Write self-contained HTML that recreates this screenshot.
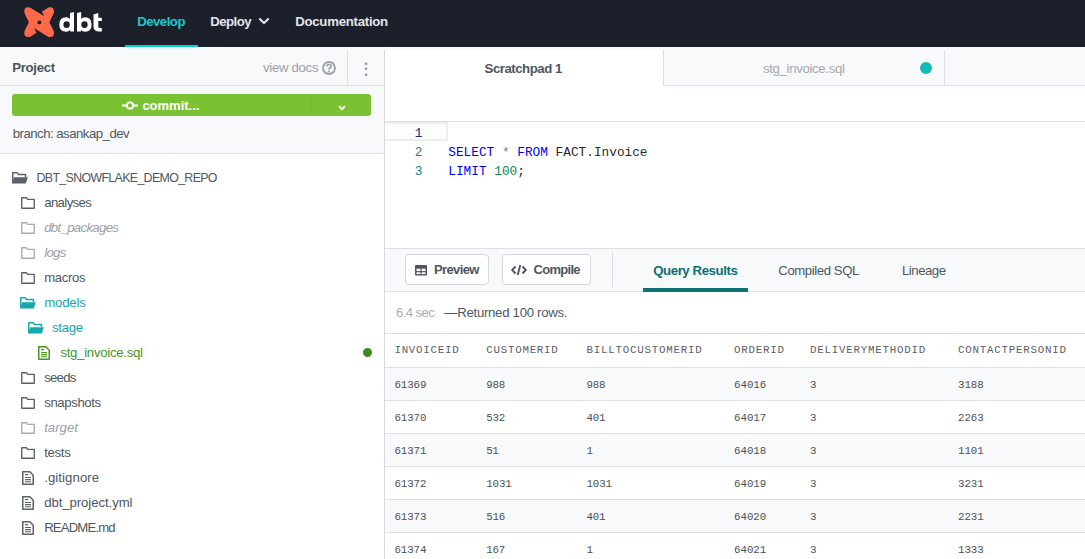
<!DOCTYPE html>
<html><head><meta charset="utf-8">
<style>
*{box-sizing:border-box;margin:0;padding:0}
html,body{width:1085px;height:559px;overflow:hidden;background:#fff;font-family:"Liberation Sans",sans-serif;position:relative}
.a{position:absolute}
.t{position:absolute;white-space:pre;line-height:1}
svg{position:absolute;overflow:visible}
.code{position:absolute;left:448.3px;font-family:"Liberation Mono",monospace;font-size:12.77px;line-height:1;white-space:pre;color:#2a2a2a}
</style></head><body>
<!-- NAV -->
<div class="a" style="left:0;top:0;width:1085px;height:47px;background:#1b202b"></div>
<svg style="left:23.7px;top:6.7px" width="30.3" height="30.3" viewBox="0 0 30 30">
  <path fill="#fe6a49" d="M0.4 5.8 Q-0.6 -0.6 5.8 0.4 L20.1 9.2 L17.6 4.6 L24.2 0.4 Q30.6 -0.6 29.6 5.8 L25.2 15 L29.6 24.2 Q30.6 30.6 24.2 29.6 L9.9 20.8 L12.4 25.4 L5.8 29.6 Q-0.6 30.6 0.4 24.2 L4.8 15 Z"/>
  <circle cx="15.2" cy="15.3" r="1.9" fill="#1b202b"/>
</svg>
<svg style="left:0;top:0" width="110" height="47" viewBox="0 0 110 47">
  <path fill="#fff" fill-rule="evenodd" d="M74 12 V31.5 H70.2 V30 Q68.6 31.8 66.3 31.8 Q59.3 31.8 59.3 24.6 Q59.3 17.3 66.3 17.3 Q68.6 17.3 70 18.9 V12.9 Z M66.6 21.2 Q63.4 21.2 63.4 24.6 Q63.4 28.1 66.6 28.1 Q69.8 28.1 69.8 24.6 Q69.8 21.2 66.6 21.2 Z"/>
  <path fill="#fff" fill-rule="evenodd" d="M77 12.9 L81.2 12 V18.9 Q82.6 17.3 84.9 17.3 Q91.6 17.3 91.6 24.6 Q91.6 31.8 84.9 31.8 Q82.6 31.8 81 30 V31.5 H77 Z M84.5 21.2 Q81.3 21.2 81.3 24.6 Q81.3 28.1 84.5 28.1 Q87.7 28.1 87.7 24.6 Q87.7 21.2 84.5 21.2 Z"/>
  <path fill="#fff" d="M93.5 14.6 L98.3 13 V17.8 H101.8 V21 H98.3 V26.4 Q98.3 28.1 100.2 28.1 H101.8 V31.5 H99.6 Q93.5 31.5 93.5 26.4 Z"/>
</svg>
<div class="a" style="left:125px;top:45px;width:73px;height:2px;background:#00d1d1"></div>
<svg style="left:258px;top:17px" width="12" height="8" viewBox="0 0 12 8"><path d="M1.3 1.5 L6 6 L10.7 1.5" stroke="#e3e6ea" stroke-width="2" fill="none"/></svg>

<!-- SIDEBAR -->
<div class="a" style="left:0;top:47px;width:384px;height:106px;background:#f8f9fb"></div>
<div class="a" style="left:0;top:85px;width:384px;height:1px;background:#dcdfe4"></div>
<div class="a" style="left:0;top:153px;width:384px;height:1px;background:#dcdfe4"></div>
<div class="a" style="left:347px;top:50px;width:1px;height:35px;background:#dcdfe4"></div>
<div class="a" style="left:384px;top:50px;width:1px;height:509px;background:#d5d8dc"></div>
<svg style="left:322px;top:60.6px" width="14" height="14" viewBox="0 0 14 14">
  <circle cx="7" cy="7" r="6" stroke="#9ba1a8" stroke-width="1.8" fill="none"/>
  <path d="M4.9 5.5 Q4.9 3.5 7 3.5 Q9.1 3.5 9.1 5.3 Q9.1 6.5 7.7 7.1 Q7 7.4 7 8.4" stroke="#9ba1a8" stroke-width="1.7" fill="none"/>
  <circle cx="7" cy="10.4" r="1" fill="#9ba1a8"/>
</svg>
<svg style="left:363px;top:60.7px" width="6" height="6" viewBox="0 0 6 6"><circle cx="3.05" cy="2.75" r="1.35" fill="#8f959c"/></svg>
<svg style="left:363px;top:66.1px" width="6" height="6" viewBox="0 0 6 6"><circle cx="3.05" cy="2.75" r="1.35" fill="#8f959c"/></svg>
<svg style="left:363px;top:71.5px" width="6" height="6" viewBox="0 0 6 6"><circle cx="3.05" cy="2.75" r="1.35" fill="#8f959c"/></svg>
<div class="a" style="left:12px;top:94px;width:359px;height:22px;background:#7bc232;border-radius:3px"></div>
<div class="a" style="left:310px;top:94px;width:1px;height:22px;background:#74b62f"></div>
<svg style="left:122px;top:101px" width="16" height="9" viewBox="0 0 16 9">
  <path d="M0 4.5 H4.5 M11.5 4.5 H16" stroke="#fff" stroke-width="2"/>
  <circle cx="8" cy="4.5" r="3.2" stroke="#fff" stroke-width="1.8" fill="none"/>
</svg>
<svg style="left:337.5px;top:104.5px" width="8" height="6" viewBox="0 0 8 6"><path d="M1 1.2 L4 4.2 L7 1.2" stroke="#fff" stroke-width="1.8" fill="none"/></svg>

<svg style="left:12.1px;top:172.1px" width="16" height="12" viewBox="0 0 16 12"><path d="M0.75 11.2 V0.75 H5.2 L6.4 2.4 H13.5 V5" stroke="#5a6169" stroke-width="1.5" fill="none" stroke-linejoin="round"/><path d="M0.3 11.6 L2.2 5.2 H15.8 L13.8 11.6 Z" fill="#5a6169"/></svg>
<svg style="left:21.2px;top:197.2px" width="14" height="12" viewBox="0 0 14 12"><path d="M0.75 11.25 V0.75 H5.6 L6.6 2.3 H13.25 V11.25 Z" stroke="#5a6169" stroke-width="1.35" fill="none" stroke-linejoin="round"/></svg>
<svg style="left:21.2px;top:222.2px" width="14" height="12" viewBox="0 0 14 12"><path d="M0.75 11.25 V0.75 H5.6 L6.6 2.3 H13.25 V11.25 Z" stroke="#a6abb1" stroke-width="1.35" fill="none" stroke-linejoin="round"/></svg>
<svg style="left:21.2px;top:247.2px" width="14" height="12" viewBox="0 0 14 12"><path d="M0.75 11.25 V0.75 H5.6 L6.6 2.3 H13.25 V11.25 Z" stroke="#a6abb1" stroke-width="1.35" fill="none" stroke-linejoin="round"/></svg>
<svg style="left:21.2px;top:272.2px" width="14" height="12" viewBox="0 0 14 12"><path d="M0.75 11.25 V0.75 H5.6 L6.6 2.3 H13.25 V11.25 Z" stroke="#5a6169" stroke-width="1.35" fill="none" stroke-linejoin="round"/></svg>
<svg style="left:20px;top:297px" width="16" height="12" viewBox="0 0 16 12"><path d="M0.75 11.2 V0.75 H5.2 L6.4 2.4 H13.5 V5" stroke="#15a8aa" stroke-width="1.5" fill="none" stroke-linejoin="round"/><path d="M0.3 11.6 L2.2 5.2 H15.8 L13.8 11.6 Z" fill="#15a8aa"/></svg>
<svg style="left:28px;top:322px" width="16" height="12" viewBox="0 0 16 12"><path d="M0.75 11.2 V0.75 H5.2 L6.4 2.4 H13.5 V5" stroke="#15a8aa" stroke-width="1.5" fill="none" stroke-linejoin="round"/><path d="M0.3 11.6 L2.2 5.2 H15.8 L13.8 11.6 Z" fill="#15a8aa"/></svg>
<svg style="left:38px;top:346.3px" width="12" height="14" viewBox="0 0 12 14"><path d="M0.75 0.75 H7.8 L11.25 4.2 V13.25 H0.75 Z" stroke="#46951f" stroke-width="1.5" fill="none" stroke-linejoin="round"/><path d="M3 3.6 H6.2 M3 6.5 H9 M3 8.6 H9 M3 10.7 H9" stroke="#46951f" stroke-width="1.1"/></svg>
<div class="a" style="left:363px;top:348px;width:9px;height:9px;border-radius:50%;background:#3d8c1e"></div>
<svg style="left:21.2px;top:372.2px" width="14" height="12" viewBox="0 0 14 12"><path d="M0.75 11.25 V0.75 H5.6 L6.6 2.3 H13.25 V11.25 Z" stroke="#5a6169" stroke-width="1.35" fill="none" stroke-linejoin="round"/></svg>
<svg style="left:21.2px;top:397.2px" width="14" height="12" viewBox="0 0 14 12"><path d="M0.75 11.25 V0.75 H5.6 L6.6 2.3 H13.25 V11.25 Z" stroke="#5a6169" stroke-width="1.35" fill="none" stroke-linejoin="round"/></svg>
<svg style="left:21.2px;top:422.2px" width="14" height="12" viewBox="0 0 14 12"><path d="M0.75 11.25 V0.75 H5.6 L6.6 2.3 H13.25 V11.25 Z" stroke="#a6abb1" stroke-width="1.35" fill="none" stroke-linejoin="round"/></svg>
<svg style="left:21.2px;top:447.2px" width="14" height="12" viewBox="0 0 14 12"><path d="M0.75 11.25 V0.75 H5.6 L6.6 2.3 H13.25 V11.25 Z" stroke="#5a6169" stroke-width="1.35" fill="none" stroke-linejoin="round"/></svg>
<svg style="left:22.2px;top:471.1px" width="12" height="14" viewBox="0 0 12 14"><path d="M0.75 0.75 H7.8 L11.25 4.2 V13.25 H0.75 Z" stroke="#5a6169" stroke-width="1.5" fill="none" stroke-linejoin="round"/><path d="M3 3.6 H6.2 M3 6.5 H9 M3 8.6 H9 M3 10.7 H9" stroke="#5a6169" stroke-width="1.1"/></svg>
<svg style="left:22.2px;top:496.1px" width="12" height="14" viewBox="0 0 12 14"><path d="M0.75 0.75 H7.8 L11.25 4.2 V13.25 H0.75 Z" stroke="#5a6169" stroke-width="1.5" fill="none" stroke-linejoin="round"/><path d="M3 3.6 H6.2 M3 6.5 H9 M3 8.6 H9 M3 10.7 H9" stroke="#5a6169" stroke-width="1.1"/></svg>
<svg style="left:22.2px;top:521.1px" width="12" height="14" viewBox="0 0 12 14"><path d="M0.75 0.75 H7.8 L11.25 4.2 V13.25 H0.75 Z" stroke="#5a6169" stroke-width="1.5" fill="none" stroke-linejoin="round"/><path d="M3 3.6 H6.2 M3 6.5 H9 M3 8.6 H9 M3 10.7 H9" stroke="#5a6169" stroke-width="1.1"/></svg>

<!-- EDITOR TABS -->
<div class="a" style="left:385px;top:47px;width:700px;height:3px;background:#f8f9fb"></div>
<div class="a" style="left:663px;top:50px;width:422px;height:36px;background:#f8f9fb;border-bottom:1px solid #dcdfe4"></div>
<div class="a" style="left:663px;top:50px;width:1px;height:35px;background:#dcdfe4"></div>
<div class="a" style="left:944px;top:50px;width:1px;height:35px;background:#dcdfe4"></div>
<div class="a" style="left:920px;top:62px;width:12px;height:12px;border-radius:50%;background:#15b8b8"></div>
<!-- EDITOR -->
<div class="a" style="left:385px;top:121px;width:700px;height:1px;background:#dcdfe4"></div>
<div class="a" style="left:385px;top:122px;width:700px;height:126px;background:#fffffd"></div>
<div class="a" style="left:385px;top:122px;width:62.5px;height:18.5px;background:#fdfdfc;border:2px solid #ededed;border-left:none"></div>
<div class="code" style="top:147.2px"><span style="color:#0000ff">SELECT</span> <span style="color:#7a7a7a">*</span> <span style="color:#0000ff">FROM</span> FACT.Invoice</div>
<div class="code" style="top:166.2px"><span style="color:#0000ff">LIMIT</span> <span style="color:#098658">100</span>;</div>

<!-- TOOLBAR -->
<div class="a" style="left:385px;top:248px;width:700px;height:44px;background:#f8f9fb;border-top:1px solid #dcdfe4;border-bottom:1px solid #dcdfe4"></div>
<div class="a" style="left:405px;top:254px;width:84px;height:31px;background:#fff;border:1px solid #d5d8dd;border-radius:4px"></div>
<div class="a" style="left:502px;top:254px;width:89px;height:31px;background:#fff;border:1px solid #d5d8dd;border-radius:4px"></div>
<svg style="left:414.9px;top:265.4px" width="12" height="10.4" viewBox="0 0 12 10.4">
  <rect x="0" y="0" width="12" height="10.4" rx="1" fill="#4e5560"/>
  <rect x="1.5" y="3.7" width="3.9" height="2.4" fill="#fff"/>
  <rect x="6.6" y="3.7" width="3.9" height="2.4" fill="#fff"/>
  <rect x="1.5" y="7.3" width="3.9" height="1.8" fill="#fff"/>
  <rect x="6.6" y="7.3" width="3.9" height="1.8" fill="#fff"/>
</svg>
<svg style="left:511px;top:264px" width="16" height="12" viewBox="0 0 16 12">
  <path d="M4.5 2.5 L1.2 6 L4.5 9.5 M11.5 2.5 L14.8 6 L11.5 9.5 M9.3 1 L6.7 11" stroke="#4e5560" stroke-width="1.9" fill="none"/>
</svg>
<div class="a" style="left:612px;top:252px;width:1px;height:35px;background:#dcdfe4"></div>
<div class="a" style="left:643px;top:287.5px;width:105px;height:4px;background:#0b7276"></div>

<!-- INFO / TABLE -->
<div class="a" style="left:385px;top:333px;width:700px;height:1px;background:#dcdfe4"></div>
<div class="a" style="left:385px;top:367px;width:700px;height:1px;background:#dcdfe4"></div>
<div class="a" style="left:385px;top:368px;width:700px;height:32px;background:#f8f9fb"></div>
<div class="a" style="left:385px;top:400px;width:700px;height:1px;background:#dcdfe4"></div>
<div class="a" style="left:385px;top:433px;width:700px;height:1px;background:#dcdfe4"></div>
<div class="a" style="left:385px;top:434px;width:700px;height:32px;background:#f8f9fb"></div>
<div class="a" style="left:385px;top:466px;width:700px;height:1px;background:#dcdfe4"></div>
<div class="a" style="left:385px;top:499px;width:700px;height:1px;background:#dcdfe4"></div>
<div class="a" style="left:385px;top:500px;width:700px;height:32px;background:#f8f9fb"></div>
<div class="a" style="left:385px;top:532px;width:700px;height:1px;background:#dcdfe4"></div>

<div class="t" style="left:137.20px;top:14.72px;font-size:13.2px;color:#1fc6c9;font-weight:bold;letter-spacing:-0.502px">Develop</div>
<div class="t" style="left:210.20px;top:14.72px;font-size:13.2px;color:#e3e6ea;font-weight:bold;letter-spacing:-0.494px">Deploy</div>
<div class="t" style="left:295.20px;top:14.72px;font-size:13.2px;color:#e3e6ea;font-weight:bold;letter-spacing:-0.249px">Documentation</div>
<div class="t" style="left:12.20px;top:60.82px;font-size:13.2px;color:#4e5560;font-weight:bold;letter-spacing:-0.286px">Project</div>
<div class="t" style="left:263.10px;top:60.62px;font-size:13.2px;color:#9ba1a8;letter-spacing:-0.313px">view docs</div>
<div class="t" style="left:142.40px;top:99.39px;font-size:13px;color:#ffffff;font-weight:bold;letter-spacing:-0.010px">commit...</div>
<div class="t" style="left:12.70px;top:126.52px;font-size:13.2px;color:#50575f;letter-spacing:-0.506px">branch: asankap_dev</div>
<div class="t" style="left:36.50px;top:171.90px;font-size:12.4px;color:#50575f;letter-spacing:-0.661px">DBT_SNOWFLAKE_DEMO_REPO</div>
<div class="t" style="left:44.20px;top:196.22px;font-size:13.2px;color:#50575f;letter-spacing:-0.623px">analyses</div>
<div class="t" style="left:44.20px;top:221.22px;font-size:13.2px;color:#9ba1a8;font-style:italic;letter-spacing:-0.675px">dbt_packages</div>
<div class="t" style="left:44.20px;top:246.22px;font-size:13.2px;color:#9ba1a8;font-style:italic;letter-spacing:-0.701px">logs</div>
<div class="t" style="left:44.20px;top:271.22px;font-size:13.2px;color:#50575f;letter-spacing:-0.387px">macros</div>
<div class="t" style="left:44.20px;top:296.22px;font-size:13.2px;color:#15a8aa;letter-spacing:-0.183px">models</div>
<div class="t" style="left:52.00px;top:321.22px;font-size:13.2px;color:#15a8aa;letter-spacing:-0.266px">stage</div>
<div class="t" style="left:60.40px;top:346.22px;font-size:13.2px;color:#46951f;letter-spacing:-0.279px">stg_invoice.sql</div>
<div class="t" style="left:44.20px;top:371.22px;font-size:13.2px;color:#50575f;letter-spacing:-0.751px">seeds</div>
<div class="t" style="left:44.20px;top:396.22px;font-size:13.2px;color:#50575f;letter-spacing:-0.391px">snapshots</div>
<div class="t" style="left:44.20px;top:421.22px;font-size:13.2px;color:#9ba1a8;font-style:italic;letter-spacing:-0.007px">target</div>
<div class="t" style="left:44.20px;top:446.22px;font-size:13.2px;color:#50575f;letter-spacing:-0.315px">tests</div>
<div class="t" style="left:44.20px;top:471.22px;font-size:13.2px;color:#50575f;letter-spacing:0.082px">.gitignore</div>
<div class="t" style="left:44.20px;top:496.22px;font-size:13.2px;color:#50575f;letter-spacing:-0.080px">dbt_project.yml</div>
<div class="t" style="left:44.20px;top:521.22px;font-size:13.2px;color:#50575f;letter-spacing:-0.863px">README.md</div>
<div class="t" style="left:484.60px;top:61.62px;font-size:13.2px;color:#4e5560;font-weight:bold;letter-spacing:-0.466px">Scratchpad 1</div>
<div class="t" style="left:762.90px;top:61.82px;font-size:13.2px;color:#a3a8ae;letter-spacing:-0.321px">stg_invoice.sql</div>
<div class="t" style="left:414.70px;top:128.23px;font-size:12.75px;color:#1c2a80;font-family:'Liberation Mono',monospace">1</div>
<div class="t" style="left:414.70px;top:147.23px;font-size:12.75px;color:#237893;font-family:'Liberation Mono',monospace">2</div>
<div class="t" style="left:414.70px;top:166.23px;font-size:12.75px;color:#237893;font-family:'Liberation Mono',monospace">3</div>
<div class="t" style="left:434.00px;top:263.29px;font-size:13px;color:#4e5560;font-weight:bold;letter-spacing:-0.626px">Preview</div>
<div class="t" style="left:533.60px;top:263.29px;font-size:13px;color:#4e5560;font-weight:bold;letter-spacing:-0.716px">Compile</div>
<div class="t" style="left:653.20px;top:264.32px;font-size:13.2px;color:#0d6f72;font-weight:bold;letter-spacing:-0.402px">Query Results</div>
<div class="t" style="left:778.30px;top:264.32px;font-size:13.2px;color:#50575f;letter-spacing:-0.433px">Compiled SQL</div>
<div class="t" style="left:902.00px;top:264.32px;font-size:13.2px;color:#50575f;letter-spacing:-0.490px">Lineage</div>
<div class="t" style="left:396.00px;top:305.82px;font-size:13.2px;color:#a9adb2;letter-spacing:-0.622px">6.4 sec</div>
<div class="t" style="left:444.30px;top:305.82px;font-size:13.2px;color:#50575f;letter-spacing:-0.282px">—Returned 100 rows.</div>
<div class="t" style="left:394.40px;top:345.33px;font-size:10.8px;color:#5a6066;font-family:'Liberation Mono',monospace;letter-spacing:0.757px">INVOICEID</div>
<div class="t" style="left:486.20px;top:345.33px;font-size:10.8px;color:#5a6066;font-family:'Liberation Mono',monospace;letter-spacing:0.761px">CUSTOMERID</div>
<div class="t" style="left:586.50px;top:345.33px;font-size:10.8px;color:#5a6066;font-family:'Liberation Mono',monospace;letter-spacing:0.771px">BILLTOCUSTOMERID</div>
<div class="t" style="left:734.10px;top:345.33px;font-size:10.8px;color:#5a6066;font-family:'Liberation Mono',monospace;letter-spacing:0.749px">ORDERID</div>
<div class="t" style="left:810.10px;top:345.33px;font-size:10.8px;color:#5a6066;font-family:'Liberation Mono',monospace;letter-spacing:0.771px">DELIVERYMETHODID</div>
<div class="t" style="left:958.10px;top:345.33px;font-size:10.8px;color:#5a6066;font-family:'Liberation Mono',monospace;letter-spacing:0.769px">CONTACTPERSONID</div>
<div class="t" style="left:394.40px;top:379.83px;font-size:10.8px;color:#4b5157;font-family:'Liberation Mono',monospace;letter-spacing:-0.077px">61369</div>
<div class="t" style="left:486.20px;top:379.83px;font-size:10.8px;color:#4b5157;font-family:'Liberation Mono',monospace;letter-spacing:-0.177px">988</div>
<div class="t" style="left:586.50px;top:379.83px;font-size:10.8px;color:#4b5157;font-family:'Liberation Mono',monospace;letter-spacing:-0.177px">988</div>
<div class="t" style="left:734.10px;top:379.83px;font-size:10.8px;color:#4b5157;font-family:'Liberation Mono',monospace;letter-spacing:-0.077px">64016</div>
<div class="t" style="left:810.10px;top:379.83px;font-size:10.8px;color:#4b5157;font-family:'Liberation Mono',monospace">3</div>
<div class="t" style="left:958.10px;top:379.83px;font-size:10.8px;color:#4b5157;font-family:'Liberation Mono',monospace;letter-spacing:-0.107px">3188</div>
<div class="t" style="left:394.40px;top:412.83px;font-size:10.8px;color:#4b5157;font-family:'Liberation Mono',monospace;letter-spacing:-0.077px">61370</div>
<div class="t" style="left:486.20px;top:412.83px;font-size:10.8px;color:#4b5157;font-family:'Liberation Mono',monospace;letter-spacing:-0.177px">532</div>
<div class="t" style="left:586.50px;top:412.83px;font-size:10.8px;color:#4b5157;font-family:'Liberation Mono',monospace;letter-spacing:-0.177px">401</div>
<div class="t" style="left:734.10px;top:412.83px;font-size:10.8px;color:#4b5157;font-family:'Liberation Mono',monospace;letter-spacing:-0.077px">64017</div>
<div class="t" style="left:810.10px;top:412.83px;font-size:10.8px;color:#4b5157;font-family:'Liberation Mono',monospace">3</div>
<div class="t" style="left:958.10px;top:412.83px;font-size:10.8px;color:#4b5157;font-family:'Liberation Mono',monospace;letter-spacing:-0.107px">2263</div>
<div class="t" style="left:394.40px;top:445.83px;font-size:10.8px;color:#4b5157;font-family:'Liberation Mono',monospace;letter-spacing:-0.077px">61371</div>
<div class="t" style="left:486.20px;top:445.83px;font-size:10.8px;color:#4b5157;font-family:'Liberation Mono',monospace;letter-spacing:-0.369px">51</div>
<div class="t" style="left:586.50px;top:445.83px;font-size:10.8px;color:#4b5157;font-family:'Liberation Mono',monospace">1</div>
<div class="t" style="left:734.10px;top:445.83px;font-size:10.8px;color:#4b5157;font-family:'Liberation Mono',monospace;letter-spacing:-0.077px">64018</div>
<div class="t" style="left:810.10px;top:445.83px;font-size:10.8px;color:#4b5157;font-family:'Liberation Mono',monospace">3</div>
<div class="t" style="left:958.10px;top:445.83px;font-size:10.8px;color:#4b5157;font-family:'Liberation Mono',monospace;letter-spacing:-0.107px">1101</div>
<div class="t" style="left:394.40px;top:478.83px;font-size:10.8px;color:#4b5157;font-family:'Liberation Mono',monospace;letter-spacing:-0.077px">61372</div>
<div class="t" style="left:486.20px;top:478.83px;font-size:10.8px;color:#4b5157;font-family:'Liberation Mono',monospace;letter-spacing:-0.107px">1031</div>
<div class="t" style="left:586.50px;top:478.83px;font-size:10.8px;color:#4b5157;font-family:'Liberation Mono',monospace;letter-spacing:-0.107px">1031</div>
<div class="t" style="left:734.10px;top:478.83px;font-size:10.8px;color:#4b5157;font-family:'Liberation Mono',monospace;letter-spacing:-0.077px">64019</div>
<div class="t" style="left:810.10px;top:478.83px;font-size:10.8px;color:#4b5157;font-family:'Liberation Mono',monospace">3</div>
<div class="t" style="left:958.10px;top:478.83px;font-size:10.8px;color:#4b5157;font-family:'Liberation Mono',monospace;letter-spacing:-0.107px">3231</div>
<div class="t" style="left:394.40px;top:511.83px;font-size:10.8px;color:#4b5157;font-family:'Liberation Mono',monospace;letter-spacing:-0.077px">61373</div>
<div class="t" style="left:486.20px;top:511.83px;font-size:10.8px;color:#4b5157;font-family:'Liberation Mono',monospace;letter-spacing:-0.177px">516</div>
<div class="t" style="left:586.50px;top:511.83px;font-size:10.8px;color:#4b5157;font-family:'Liberation Mono',monospace;letter-spacing:-0.177px">401</div>
<div class="t" style="left:734.10px;top:511.83px;font-size:10.8px;color:#4b5157;font-family:'Liberation Mono',monospace;letter-spacing:-0.077px">64020</div>
<div class="t" style="left:810.10px;top:511.83px;font-size:10.8px;color:#4b5157;font-family:'Liberation Mono',monospace">3</div>
<div class="t" style="left:958.10px;top:511.83px;font-size:10.8px;color:#4b5157;font-family:'Liberation Mono',monospace;letter-spacing:-0.107px">2231</div>
<div class="t" style="left:394.40px;top:544.83px;font-size:10.8px;color:#4b5157;font-family:'Liberation Mono',monospace;letter-spacing:-0.077px">61374</div>
<div class="t" style="left:486.20px;top:544.83px;font-size:10.8px;color:#4b5157;font-family:'Liberation Mono',monospace;letter-spacing:-0.177px">167</div>
<div class="t" style="left:586.50px;top:544.83px;font-size:10.8px;color:#4b5157;font-family:'Liberation Mono',monospace">1</div>
<div class="t" style="left:734.10px;top:544.83px;font-size:10.8px;color:#4b5157;font-family:'Liberation Mono',monospace;letter-spacing:-0.077px">64021</div>
<div class="t" style="left:810.10px;top:544.83px;font-size:10.8px;color:#4b5157;font-family:'Liberation Mono',monospace">3</div>
<div class="t" style="left:958.10px;top:544.83px;font-size:10.8px;color:#4b5157;font-family:'Liberation Mono',monospace;letter-spacing:-0.107px">1333</div>
</body></html>
